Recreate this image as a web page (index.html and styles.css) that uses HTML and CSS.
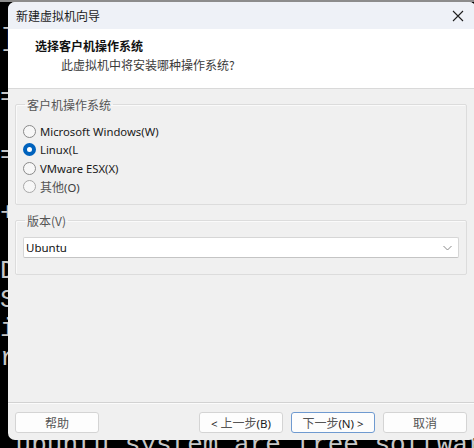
FILE: index.html
```html
<!DOCTYPE html>
<html lang="zh-CN">
  <head>
    <meta charset="UTF-8" />
    <title>新建虚拟机向导</title>
    <link rel="stylesheet" href="styles.css">
  </head>
  <body>
    <div class="screen">
      <div class="terminal">
        <div class="term-line">]</div>
        <div class="term-line"></div>
        <div class="term-line">=</div>
        <div class="term-line"></div>
        <div class="term-line">=</div>
        <div class="term-line"></div>
        <div class="term-line">+</div>
        <div class="term-line"></div>
        <div class="term-line">D</div>
        <div class="term-line">S</div>
        <div class="term-line">i</div>
        <div class="term-line">r</div>
        <div class="term-line"></div>
        <div class="term-line"></div>
        <div class="term-line term-line--wide"> ubuntu system are free software</div>
      </div>

      <div class="dialog">
        <div class="titlebar">
          <span class="title">新建虚拟机向导</span>
          <svg class="close" width="12" height="12" viewBox="0 0 12 12">
            <path d="M1 1 L11 11 M11 1 L1 11" stroke="#1f1f1f" stroke-width="1.1" fill="none" />
          </svg>
        </div>

        <div class="header">
          <h1>选择客户机操作系统</h1>
          <p>此虚拟机中将安装哪种操作系统?</p>
        </div>

        <div class="body">
          <fieldset class="group">
            <legend>客户机操作系统</legend>
            <div class="options">
              <label class="option"><span class="radio"></span><span>Microsoft Windows(W)</span></label>
              <label class="option"><span class="radio radio--on"></span><span>Linux(L</span></label>
              <label class="option"><span class="radio"></span><span>VMware ESX(X)</span></label>
              <label class="option option--dim"><span class="radio"></span><span><span class="song">其他</span>(O)</span></label>
            </div>
          </fieldset>

          <fieldset class="group group--version">
            <legend>版本(V)</legend>
            <div class="select">
              <span>Ubuntu</span>
              <svg width="9" height="6" viewBox="0 0 9 6">
                <path d="M0.5 1 L4.5 5 L8.5 1" stroke="#8a8a8a" stroke-width="1" fill="none" />
              </svg>
            </div>
          </fieldset>
        </div>

        <div class="footer">
          <button class="btn"><span class="song">帮助</span></button>
          <div class="spacer"></div>
          <button class="btn"><span>&lt; <span class="song">上一步</span>(B)</span></button>
          <button class="btn btn--default"><span><span class="song">下一步</span>(N) &gt;</span></button>
          <button class="btn"><span class="song">取消</span></button>
        </div>
      </div>
    </div>
  </body>
</html>
```

FILE: styles.css
```css
* {
  margin: 0;
  padding: 0;
  box-sizing: border-box;
}

body {
  background: #000;
  font-family: "Noto Sans", "Noto Sans CJK SC", sans-serif;
}

.screen {
  position: relative;
  width: 474px;
  height: 448px;
  overflow: hidden;
  background: #000;
  border-top: 2px solid #8c8c8c;
}

.terminal {
  font-family: "Liberation Mono", monospace;
  font-size: 26px;
  line-height: 29px;
  color: #c8c8c8;
  padding-top: 23px;
  display: flex;
  flex-direction: column;
}

.term-line {
  height: 29px;
  width: 16px;
  white-space: pre;
}

.term-line--wide {
  width: auto;
}

/* the wizard window sits over the terminal */
.dialog {
  position: absolute;
  top: 0;
  left: 8px;
  width: 468px;
  height: 438px;
  display: flex;
  flex-direction: column;
  background: #f0f0f0;
  border-radius: 7px;
  overflow: hidden;
}

.titlebar {
  height: 27px;
  flex: none;
  display: flex;
  align-items: center;
  justify-content: space-between;
  padding: 0 12px 0 8px;
  background: #eef1f7;
}

.title {
  font-family: "Noto Sans CJK SC", sans-serif;
  font-size: 12px;
  color: #1b1b1b;
}

.header {
  height: 60px;
  flex: none;
  background: #fff;
  border-bottom: 1px solid #d9d9d9;
  padding: 8px 0 0 27px;
}

.header h1 {
  font-family: "Noto Sans CJK SC", sans-serif;
  font-size: 12px;
  font-weight: 700;
  line-height: 17px;
  color: #111;
}

.header p {
  font-family: "Noto Sans CJK SC", sans-serif;
  font-size: 12px;
  line-height: 17px;
  margin-top: 2px;
  padding-left: 26px;
  color: #3a3a3a;
}

.body {
  flex: 1;
  padding: 8px 9px 0 7px;
  display: flex;
  flex-direction: column;
  gap: 8px;
}

.group {
  border: 1px solid #dcdcdc;
  box-shadow: inset 1px 1px 0 #fafafa;
  border-radius: 2px;
  padding: 0 7px 8px 7px;
}

.group legend {
  font-family: "Noto Sans CJK SC", sans-serif;
  font-size: 12px;
  line-height: 15px;
  color: #555;
  margin-left: 2px;
  padding: 0 2px;
}

.options {
  padding-top: 10px;
  display: flex;
  flex-direction: column;
}

.option {
  height: 18.5px;
  display: flex;
  align-items: center;
  gap: 4px;
  font-size: 11.3px;
  color: #1a1a1a;
}

.option--dim {
  color: #3a3a3a;
}

.song {
  font-family: "Noto Sans CJK SC", sans-serif;
  font-size: 12px;
  color: #555;
}

.radio {
  width: 13px;
  height: 13px;
  border-radius: 50%;
  border: 1px solid #8a8a8a;
  background: #f7f7f7;
  flex: none;
}

.radio--on {
  border: 4px solid #0062bd;
  background: #fff;
}

.option--dim .radio {
  border-color: #a8a8a8;
}

.group--version {
  padding-bottom: 16px;
}

.select {
  margin-top: 9px;
  height: 21px;
  background: #fff;
  border: 1px solid #d6d6d6;
  border-bottom-color: #c4c4c4;
  border-radius: 2px;
  display: flex;
  align-items: center;
  justify-content: space-between;
  padding: 0 6px 0 2px;
  font-size: 11.5px;
  color: #111;
}

.footer {
  height: 38px;
  flex: none;
  border-top: 1px solid #d2d2d2;
  box-shadow: inset 0 1px 0 #fbfbfb;
  display: flex;
  gap: 8px;
  padding: 9px 9px 0 7px;
}

.spacer {
  flex: 1;
}

.btn {
  width: 84px;
  height: 21px;
  background: #fdfdfd;
  border: 1px solid #d4d4d4;
  border-radius: 3px;
  font-family: "Noto Sans", "Noto Sans CJK SC", sans-serif;
  font-size: 11.5px;
  color: #1a1a1a;
  display: flex;
  align-items: center;
  justify-content: center;
}

.btn--default {
  border-color: #6f9ad0;
}
```
